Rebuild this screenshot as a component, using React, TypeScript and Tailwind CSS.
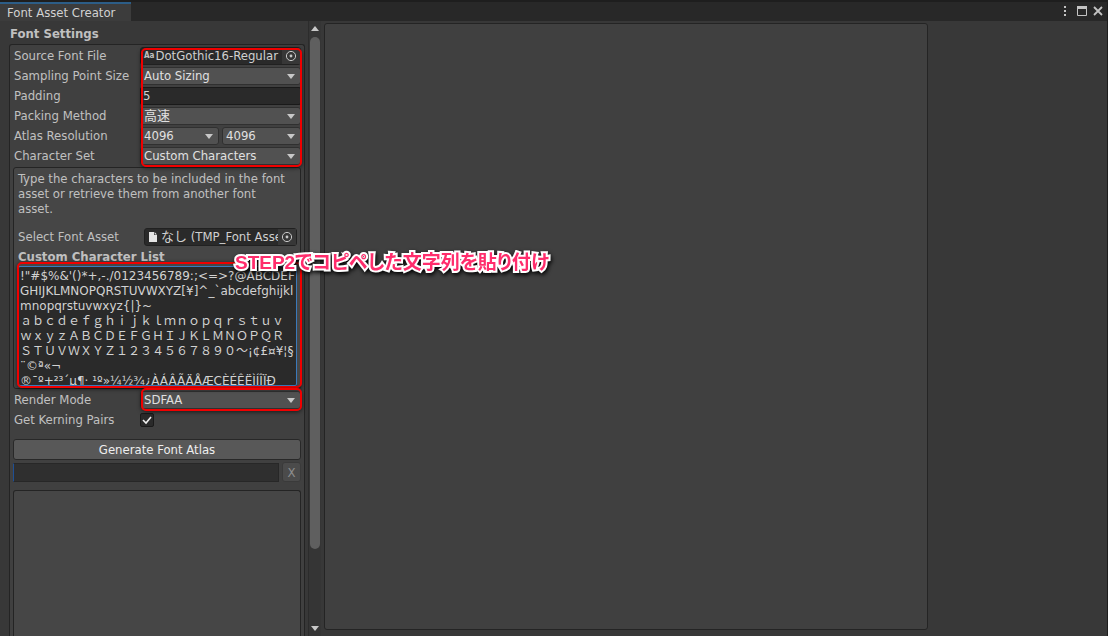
import { useState } from 'react'
import type { ReactNode } from 'react'

const CHARACTERS = [
  '!"#$%&\'()*+,-./0123456789:;<=>?@ABCDEF',
  'GHIJKLMNOPQRSTUVWXYZ[¥]^_`abcdefghijkl',
  'mnopqrstuvwxyz{|}~',
  'ａｂｃｄｅｆｇｈｉｊｋｌｍｎｏｐｑｒｓｔｕｖ',
  'ｗｘｙｚＡＢＣＤＥＦＧＨＩＪＫＬＭＮＯＰＱＲ',
  'ＳＴＵＶＷＸＹＺ１２３４５６７８９０～¡¢£¤¥¦§',
  '¨©ª«¬',
  '®¯º+²³´µ¶· ¹º»¼½¾¿ÀÁÂÃÄÅÆÇÈÉÊËÌÍÎÏÐ',
].join('\n')

function Row({ label, id, children }: { label: string; id: string; children: ReactNode }) {
  return (
    <div className="flex h-5 items-center">
      <label htmlFor={id} className="w-[126px] shrink-0 whitespace-nowrap">
        {label}
      </label>
      {children}
    </div>
  )
}

function Dropdown({ id, label, value }: { id: string; label?: string; value: string }) {
  return (
    <div className="relative min-w-0 flex-1">
      <select
        id={id}
        aria-label={label}
        className="block h-[18px] w-full appearance-none rounded-[3px] border border-[#303030] bg-[#515151] pl-[3px] leading-4 text-[#e0e0e0] outline-none"
      >
        <option>{value}</option>
      </select>
      <svg viewBox="0 0 8 5" className="pointer-events-none absolute top-[7px] right-[6px] h-[5px] w-2" fill="#c8c8c8">
        <path d="M0 0h8L4 5z" />
      </svg>
    </div>
  )
}

function ObjectField({ id, value, icon }: { id: string; value: string; icon: ReactNode }) {
  return (
    <div className="flex h-[18px] min-w-0 flex-1 items-center rounded-[3px] border border-[#212121] bg-[#2a2a2a] pl-[3px]">
      {icon}
      <input id={id} readOnly value={value} className="h-4 w-0 min-w-0 flex-1 bg-transparent text-[#d0d0d0] outline-none" />
      <button aria-label="Select object" className="flex h-4 w-[18px] shrink-0 items-center justify-center bg-[#373737]">
        <svg viewBox="0 0 12 12" className="size-3" fill="none" stroke="#c8c8c8">
          <circle cx="6" cy="6" r="4.6" />
          <circle cx="6" cy="6" r="1.4" fill="#c8c8c8" stroke="none" />
        </svg>
      </button>
    </div>
  )
}

function TitleBar() {
  return (
    <header className="flex h-[21px] shrink-0 items-stretch justify-between border-t-2 border-[#1e1e1e] bg-[#282828]">
      <div className="flex w-[131px] items-center border-t-2 border-[#2c5d87] bg-[#3c3c3c] pl-[7px] whitespace-nowrap text-[#d2d2d2]">
        Font Asset Creator
      </div>
      <div className="flex items-center gap-[6px] pr-1 pb-[2px]">
        <button aria-label="Menu" className="pr-1">
          <svg viewBox="0 0 4 12" className="h-3 w-1" fill="#c4c4c4">
            <path d="M1 1h2v2H1zM1 5h2v2H1zM1 9h2v2H1z" />
          </svg>
        </button>
        <button aria-label="Maximize">
          <svg viewBox="0 0 10 10" className="size-[10px]" fill="none" stroke="#c4c4c4">
            <path d="M0.500 0.500h9v9h-9z" />
            <path d="M0 1.500h10" strokeWidth="3" />
          </svg>
        </button>
        <button aria-label="Close">
          <svg viewBox="0 0 10 10" className="size-[10px]" stroke="#c4c4c4" strokeWidth="1.8">
            <path d="M1 1l8 8M9 1L1 9" />
          </svg>
        </button>
      </div>
    </header>
  )
}

function Highlight({ className }: { className: string }) {
  return <div className={`pointer-events-none absolute z-10 rounded-[5px] border-2 border-[#f00000] shadow-[0_1px_4px_#00000099] ${className}`} />
}

function CharacterPanel({ text, onChange }: { text: string; onChange: (text: string) => void }) {
  return (
    <div className="mt-px flex flex-col rounded-[3px] border border-[#242424] bg-[#464646] pt-[3px] pr-[3px] pb-[2px] pl-1">
      <p className="pr-2 leading-[15px]">Type the characters to be included in the font asset or retrieve them from another font asset.</p>
      <div className="mt-[11px]">
        <Row label="Select Font Asset" id="font-asset">
          <ObjectField
            id="font-asset"
            value="なし (TMP_Font Asset)"
            icon={
              <svg viewBox="0 0 8 10" className="mr-1 ml-px h-[10px] w-2 shrink-0" fill="#e4e4e4">
                <path d="M0 0h5v3h3v7H0z" />
                <path d="M5.600 0L8 2.400H5.600z" />
              </svg>
            }
          />
        </Row>
      </div>
      <label htmlFor="characters" className="h-[19px] leading-[19px] font-bold">
        Custom Character List
      </label>
      <div className="relative">
        <textarea
          id="characters"
          wrap="off"
          spellCheck={false}
          value={text}
          onChange={(e) => onChange(e.target.value)}
          className="block h-[120px] w-full resize-none overflow-hidden rounded-[2px] border border-[#3a79bb] bg-[#2a2a2a] px-px pt-[2px] font-['DejaVu_Sans','Noto_Sans_CJK_JP',sans-serif] text-xs leading-[15px] text-[#d2d2d2] outline-none"
        />
        <Highlight className="-top-1 -right-[5px] -bottom-[2px] -left-px" />
        <span className="pointer-events-none absolute -top-[15px] left-[217px] z-20 font-['Liberation_Sans','Noto_Sans_CJK_JP',sans-serif] text-[19px] leading-6 font-bold whitespace-nowrap text-[#ff2d6c] drop-shadow-[1px_2px_2px_#000000] [-webkit-text-stroke:4px_white] [font-feature-settings:'palt'] [paint-order:stroke_fill]">
          STEP2でコピペした文字列を貼り付け
        </span>
      </div>
    </div>
  )
}

function Scrollbar() {
  return (
    <div className="flex w-[13px] shrink-0 flex-col items-center border-l border-[#2c2c2c] bg-[#353535] py-[5px]">
      <svg viewBox="0 0 8 5" className="h-[5px] w-2 shrink-0" fill="#c8c8c8">
        <path d="M4 0l4 5H0z" />
      </svg>
      <div className="flex min-h-0 w-[10px] flex-1 flex-col pt-[6px]">
        <div className="h-[87%] rounded-full bg-[#5f5f5f]" />
      </div>
      <svg viewBox="0 0 8 5" className="h-[5px] w-2 shrink-0" fill="#c8c8c8">
        <path d="M0 0h8L4 5z" />
      </svg>
    </div>
  )
}

export default function App() {
  const [text, setText] = useState(CHARACTERS)
  const [kerning, setKerning] = useState(true)

  return (
    <div className="flex h-screen flex-col overflow-hidden border-r border-[#1e1e1e] bg-[#383838] font-['DejaVu_Sans_Condensed','Noto_Sans_CJK_JP',sans-serif] text-[13px] text-[#c0c0c0]">
      <TitleBar />
      <main className="flex min-h-0 flex-1">
        <section className="flex w-[308px] shrink-0 flex-col pr-[3px] pl-[9px]">
          <h1 className="h-[23px] shrink-0 pl-px leading-[25px] font-bold">Font Settings</h1>
          <div className="flex min-h-0 flex-1 flex-col rounded-t-[3px] border border-b-0 border-[#242424] bg-[#404040] px-[3px] pt-px">
            <div className="relative pl-px">
              <Row label="Source Font File" id="source">
                <ObjectField id="source" value="DotGothic16-Regular" icon={<span className="mr-px text-[8px] font-bold">Aa</span>} />
              </Row>
              <Row label="Sampling Point Size" id="sampling">
                <Dropdown id="sampling" value="Auto Sizing" />
              </Row>
              <Row label="Padding" id="padding">
                <input id="padding" defaultValue="5" className="h-[18px] min-w-0 flex-1 rounded-[2px] border border-[#1a1a1a] bg-[#2a2a2a] px-[2px] text-[#d2d2d2] outline-none" />
              </Row>
              <Row label="Packing Method" id="packing">
                <Dropdown id="packing" value="高速" />
              </Row>
              <Row label="Atlas Resolution" id="atlas-width">
                <div className="flex min-w-0 flex-1 gap-[3px]">
                  <Dropdown id="atlas-width" value="4096" />
                  <Dropdown id="atlas-height" label="Atlas height" value="4096" />
                </div>
              </Row>
              <Row label="Character Set" id="charset">
                <Dropdown id="charset" value="Custom Characters" />
              </Row>
              <Highlight className="top-[2px] -right-px -bottom-px left-[128px]" />
            </div>
            <CharacterPanel text={text} onChange={setText} />
            <div className="relative mt-px pl-px">
              <Row label="Render Mode" id="render-mode">
                <Dropdown id="render-mode" value="SDFAA" />
              </Row>
              <Highlight className="-top-[2px] -right-px -bottom-px left-[128px]" />
            </div>
            <div className="pl-px">
              <Row label="Get Kerning Pairs" id="kerning">
                <div className="relative size-[14px]">
                  <input
                    id="kerning"
                    type="checkbox"
                    checked={kerning}
                    onChange={(e) => setKerning(e.target.checked)}
                    className="peer block size-[14px] appearance-none rounded-[2px] border border-[#1a1a1a] bg-[#2a2a2a]"
                  />
                  <svg viewBox="0 0 14 14" className="pointer-events-none absolute inset-0 hidden peer-checked:block" fill="none" stroke="#f0f0f0" strokeWidth="1.6">
                    <path d="M3 7l3 3 5-6" />
                  </svg>
                </div>
              </Row>
            </div>
            <button className="mt-[9px] h-[21px] shrink-0 rounded-[3px] border border-[#282828] bg-[#585858] leading-[18px] text-[#eeeeee]">
              Generate Font Atlas
            </button>
            <div className="mt-[2px] flex h-5 shrink-0 gap-[3px]">
              <div role="progressbar" aria-label="Progress" className="mt-px flex-1 border border-[#272727] border-l-[#1f4f94] bg-[#2f2f2f]" />
              <button disabled aria-label="Cancel" className="w-[19px] rounded-[3px] border border-[#3a3a3a] bg-[#4b4b4b] leading-[17px] text-[#8e8e8e]">
                X
              </button>
            </div>
            <div className="mt-2 flex-1 rounded-t-[3px] border border-b-0 border-[#242424] bg-[#464646]" />
          </div>
        </section>
        <Scrollbar />
        <div className="h-full pt-[2px] pb-[6px] pl-[3px]">
          <div className="aspect-[604/607] h-full rounded-[3px] border border-[#242424] bg-[#404040]" />
        </div>
      </main>
    </div>
  )
}
